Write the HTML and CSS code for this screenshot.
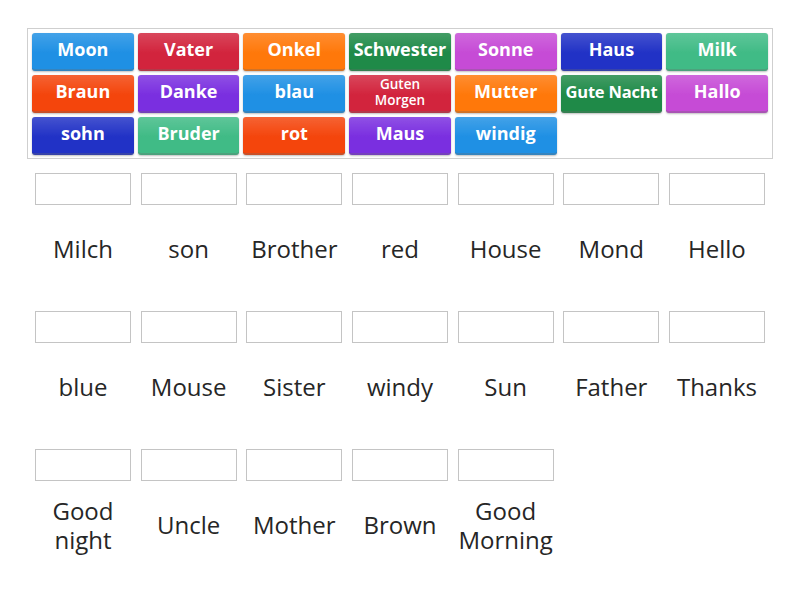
FILE: index.html
```html
<!DOCTYPE html>
<html>
<head>
<meta charset="utf-8">
<link rel="stylesheet" href="styles.css">
</head>
<body>
<div class="page">
  <div class="bank">
    <div class="tile blue">Moon</div>
    <div class="tile red">Vater</div>
    <div class="tile orange">Onkel</div>
    <div class="tile dgreen">Schwester</div>
    <div class="tile pink">Sonne</div>
    <div class="tile dblue">Haus</div>
    <div class="tile mint">Milk</div>
    <div class="tile ored">Braun</div>
    <div class="tile purple">Danke</div>
    <div class="tile blue">blau</div>
    <div class="tile red small"><span>Guten</span><span>Morgen</span></div>
    <div class="tile orange">Mutter</div>
    <div class="tile dgreen mid">Gute Nacht</div>
    <div class="tile pink">Hallo</div>
    <div class="tile dblue">sohn</div>
    <div class="tile mint">Bruder</div>
    <div class="tile ored">rot</div>
    <div class="tile purple">Maus</div>
    <div class="tile blue">windig</div>
  </div>
  <div class="targets">
    <div class="cell"><div class="drop"></div><div class="label">Milch</div></div>
    <div class="cell"><div class="drop"></div><div class="label">son</div></div>
    <div class="cell"><div class="drop"></div><div class="label">Brother</div></div>
    <div class="cell"><div class="drop"></div><div class="label">red</div></div>
    <div class="cell"><div class="drop"></div><div class="label">House</div></div>
    <div class="cell"><div class="drop"></div><div class="label">Mond</div></div>
    <div class="cell"><div class="drop"></div><div class="label">Hello</div></div>
    <div class="cell"><div class="drop"></div><div class="label">blue</div></div>
    <div class="cell"><div class="drop"></div><div class="label">Mouse</div></div>
    <div class="cell"><div class="drop"></div><div class="label">Sister</div></div>
    <div class="cell"><div class="drop"></div><div class="label">windy</div></div>
    <div class="cell"><div class="drop"></div><div class="label">Sun</div></div>
    <div class="cell"><div class="drop"></div><div class="label">Father</div></div>
    <div class="cell"><div class="drop"></div><div class="label">Thanks</div></div>
    <div class="cell"><div class="drop"></div><div class="label two"><span>Good</span><span>night</span></div></div>
    <div class="cell"><div class="drop"></div><div class="label">Uncle</div></div>
    <div class="cell"><div class="drop"></div><div class="label">Mother</div></div>
    <div class="cell"><div class="drop"></div><div class="label">Brown</div></div>
    <div class="cell"><div class="drop"></div><div class="label two"><span>Good</span><span>Morning</span></div></div>
  </div>
</div>
</body>
</html>
```

FILE: styles.css
```css
html, body {
  margin: 0;
  padding: 0;
  background: #ffffff;
}
body {
  font-family: "Open Sans", "Liberation Sans", sans-serif;
}
.page {
  padding: 28px 27px 0 27px;
}
.bank {
  border: 1px solid #cfcfcf;
  padding: 4px 4px 3px 4px;
  display: grid;
  grid-template-columns: repeat(7, 1fr);
  column-gap: 4px;
  row-gap: 4px;
  box-sizing: border-box;
  height: 131px;
  grid-auto-rows: 38px;
}
.tile {
  border-radius: 3px;
  color: #ffffff;
  font-weight: 700;
  font-size: 18px;
  display: flex;
  flex-direction: column;
  align-items: center;
  justify-content: center;
  text-align: center;
  white-space: nowrap;
  box-shadow: 0 1px 2px rgba(0,0,0,0.25);
  border-bottom: 2px solid rgba(0,0,0,0.18);
  box-sizing: border-box;
  padding-bottom: 4px;
  background-image: linear-gradient(to bottom, rgba(255,255,255,0.16), rgba(255,255,255,0) 55%);
}
.tile.small {
  font-size: 13.5px;
  line-height: 16px;
  font-weight: 600;
  padding-bottom: 3px;
}
.tile.mid {
  font-size: 16.5px;
  letter-spacing: -0.2px;
}
.blue { background-color: #1f90e4; }
.red { background-color: #d2243d; }
.orange { background-color: #ff780a; }
.dgreen { background-color: #1f8a48; }
.pink { background-color: #c64bd6; }
.dblue { background-color: #2132c6; }
.mint { background-color: #40bb86; }
.ored { background-color: #f4450c; }
.purple { background-color: #7a2fe0; }

.targets {
  margin-top: 14px;
  display: grid;
  grid-template-columns: repeat(7, 96px);
  column-gap: 9.67px;
  row-gap: 20px;
  justify-content: start;
  padding-left: 8px;
}
.cell {
  display: flex;
  flex-direction: column;
}
.drop {
  height: 32px;
  border: 1px solid #c4c4c4;
  box-sizing: border-box;
  background: #fff;
}
.label {
  height: 86px;
  display: flex;
  flex-direction: column;
  align-items: center;
  justify-content: center;
  text-align: center;
  font-size: 24px;
  line-height: 29px;
  color: #262626;
  white-space: nowrap;
}
.label.two {
  padding-top: 2px;
  box-sizing: border-box;
}
```
